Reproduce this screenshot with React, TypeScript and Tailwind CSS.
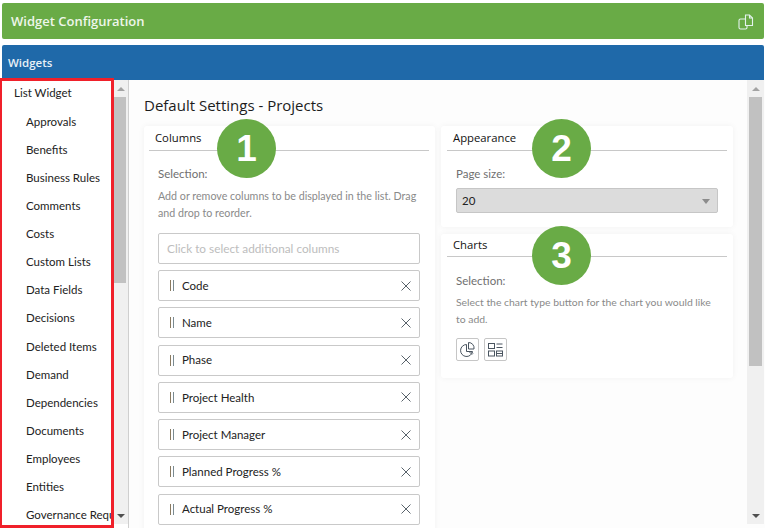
import React from "react";

const font = { fontFamily: '"Lato", "Open Sans", "Liberation Sans", sans-serif' };
const heading = { fontFamily: '"Open Sans", "Liberation Sans", sans-serif' };

const widgets = ["Approvals","Benefits","Business Rules","Comments","Costs","Custom Lists","Data Fields","Decisions","Deleted Items","Demand","Dependencies","Documents","Employees","Entities","Governance Requests"];
const columns = ["Code","Name","Phase","Project Health","Project Manager","Planned Progress %","Actual Progress %"];

function Badge({ n, className }: { n: string; className: string }) {
  return (
    <div className={"absolute flex h-[59px] w-[59px] items-center justify-center rounded-full bg-[#69ab46] text-[37px] font-bold leading-none text-white " + className} style={{ fontFamily: '"Liberation Sans", sans-serif' }}>
      {n}
    </div>
  );
}

function Panel({ title, className, headClass, children }: { title: string; className?: string; headClass: string; children: React.ReactNode }) {
  return (
    <section className={"relative rounded-[3px] bg-white shadow-[0_0_6px_rgba(0,0,0,0.05)] " + (className ?? "")}>
      <h3 className={"flex items-center border-b border-[#c8c8c8] px-[6px] text-[11.3px] font-normal text-[#111] " + headClass} style={heading}>{title}</h3>
      <div className="px-[9px]">{children}</div>
    </section>
  );
}

function ScrollBar({ thumb, className }: { thumb: string; className?: string }) {
  return (
    <div className={"flex shrink-0 flex-col bg-[#f0f0f0] " + (className ?? "")}>
      <div className="flex h-[17px] w-full items-center justify-center">
        <div className="h-0 w-0 border-x-[4px] border-b-[4px] border-x-transparent border-b-[#a3a3a3]" />
      </div>
      <div className={"bg-[#c1c1c1] " + thumb} />
      <div className="flex-1" />
      <div className="flex h-[17px] w-full items-center justify-center">
        <div className="h-0 w-0 border-x-[4px] border-t-[4px] border-x-transparent border-t-[#505050]" />
      </div>
    </div>
  );
}

function Row({ label }: { label: string }) {
  return (
    <div className="flex h-[31px] items-center rounded-[2px] border border-[#c9c9c9] bg-white pl-[11px] pr-[7px] text-[11.5px] text-[#222]">
      <span className="mr-[8px] flex gap-[2px]">
        <span className="h-[11px] w-px bg-[#8a7a60]" />
        <span className="h-[11px] w-px bg-[#7a8a90]" />
      </span>
      <span className="flex-1">{label}</span>
      <svg width="12" height="12" viewBox="0 0 12 12" fill="none" stroke="#59636b" strokeWidth="1">
        <path d="M1.5 1.5l9 9M10.5 1.5l-9 9" />
      </svg>
    </div>
  );
}

export default function App() {
  return (
    <div className="h-[528px] w-[765px] overflow-hidden bg-white" style={font}>
      <div className="pl-[2px] pr-px pt-[3px]" style={heading}>
        <header className="flex h-[36px] items-center justify-between rounded-[2px] bg-[#69ab46] pl-[9px] pr-[10px] pt-[2px] text-[13px] font-semibold text-[#eef6ea]">
          <span>Widget Configuration</span>
          <svg width="16" height="16" viewBox="0 0 16 16" fill="none" stroke="#e4f3ee" strokeWidth="1.1">
            <path d="M7.5 1h4l3 3v7.5h-7z" />
            <path d="M11.5 1v3h3" />
            <path d="M7.5 5H2.5A1.5 1.5 0 0 0 1 6.5v7A1.5 1.5 0 0 0 2.5 15h5A1.5 1.5 0 0 0 9 13.5v-2" />
          </svg>
        </header>
        <div className="mt-[6px] flex h-[35px] items-center rounded-t-[2px] bg-[#1f69a9] pl-[6px] pt-px text-[11.5px] font-semibold text-[#e8f0f6]">Widgets</div>
      </div>
      <div className="relative flex h-[448px]">
        <aside className="flex w-[129px] shrink-0 border-r border-[#cfcfcf]">
          <nav className="-mt-[1px] h-[449px] w-[113px] shrink-0 overflow-hidden whitespace-nowrap text-[11.5px] text-[#222]">
            <div className="flex h-[28.14px] items-center pl-[14px]">List Widget</div>
            {widgets.map((w) => (
              <div key={w} className="flex h-[28.14px] items-center pl-[26px]">{w}</div>
            ))}
          </nav>
          <ScrollBar thumb="h-[186px] w-[13px]" className="h-[444px] w-[15px]" />
        </aside>
        <div className="pointer-events-none absolute left-0 top-[-2px] h-[450px] w-[114px] border-[3px] border-l-2 border-[#f0202a]" />
        <main className="flex min-w-0 flex-1 bg-[#fdfdfd]">
          <div className="min-w-0 flex-1 overflow-hidden pl-[15px] pr-[14px]">
            <h2 className="mt-[15px] h-[20px] text-[15px] font-medium leading-[20px] text-[#1c1c1c]" style={heading}>Default Settings - Projects</h2>
            <div className="mt-[11px] flex gap-[6px]">
              <Panel title="Columns" headClass="ml-[5px] mr-[6px] h-[25px]" className="h-[420px] w-[291px] shrink-0">
                <Badge n="1" className="left-[73px] top-[-7px]" />
                <div className="pl-[5px] pr-[6px]">
                  <p className="mt-[14px] text-[11.5px] leading-[17px] text-[#707070]">Selection:</p>
                  <p className="mt-[5px] text-[10.7px] leading-[17px] text-[#8a8a8a]">Add or remove columns to be displayed in the list. Drag and drop to reorder.</p>
                  <div className="mt-[12px] flex h-[31px] items-center rounded-[2px] border border-[#c9c9c9] pl-[8px] pt-px text-[11.8px] text-[#bdbdbd]">Click to select additional columns</div>
                  <div className="mt-[6px] flex flex-col gap-[6.25px]">
                    {columns.map((c) => <Row key={c} label={c} />)}
                  </div>
                </div>
              </Panel>
              <div className="flex min-w-0 flex-1 flex-col gap-[7px]">
                <Panel title="Appearance" headClass="mx-[6px] h-[25px]" className="h-[101px]">
                  <Badge n="2" className="left-[91px] top-[-7px]" />
                  <div className="px-[6px]">
                    <p className="mt-[14px] text-[11.5px] leading-[17px] text-[#707070]">Page size:</p>
                    <div className="mt-[6px] flex h-[25px] items-center justify-between rounded-[2px] border border-[#c6c6c6] bg-[#dcdcdc] pl-[5px] pr-[7px] pt-px text-[11.5px] text-[#222]">
                      <span>20</span>
                      <div className="h-0 w-0 border-x-[4px] border-t-[5px] border-x-transparent border-t-[#8c8c8c]" />
                    </div>
                  </div>
                </Panel>
                <Panel title="Charts" headClass="mx-[6px] h-[23px] pt-px" className="h-[144px]">
                  <Badge n="3" className="left-[91px] top-[-8px]" />
                  <div className="px-[6px]">
                    <p className="mt-[15px] text-[11.5px] leading-[17px] text-[#707070]">Selection:</p>
                    <p className="mt-[5px] text-[10.4px] leading-[17px] text-[#8a8a8a]">Select the chart type button for the chart you would like to add.</p>
                    <div className="mt-[10px] flex gap-[5px]">
                      <button className="flex h-[23px] w-[23px] items-center justify-center rounded-[2px] border border-[#c6c6c6] bg-white">
                        <svg width="17" height="17" viewBox="0 0 17 17" fill="none" stroke="#4a5560" strokeWidth="1">
                          <path d="M7.5 3.5a6 6 0 1 0 6 7h-6z" />
                          <path d="M9.5 1.5a5.5 5.5 0 0 1 5.5 6.5h-5.5z" />
                          <path d="M10 10.5l3 3M12 10.5l2 2" />
                        </svg>
                      </button>
                      <button className="flex h-[23px] w-[23px] items-center justify-center rounded-[2px] border border-[#c6c6c6] bg-white">
                        <svg width="17" height="17" viewBox="0 0 17 17" fill="none" stroke="#4a5560" strokeWidth="1">
                          <rect x="1.5" y="2.5" width="6" height="5" />
                          <rect x="1.5" y="10" width="6" height="5" />
                          <path d="M9.5 3h6M9.5 6.5h6" />
                          <rect x="9.5" y="10" width="6" height="5" />
                          <path d="M9.5 12.5h6" />
                        </svg>
                      </button>
                    </div>
                  </div>
                </Panel>
              </div>
            </div>
          </div>
          <ScrollBar thumb="ml-[2px] h-[269px] w-[13px]" className="mr-px h-[444px] w-[17px]" />
        </main>
      </div>
    </div>
  );
}
